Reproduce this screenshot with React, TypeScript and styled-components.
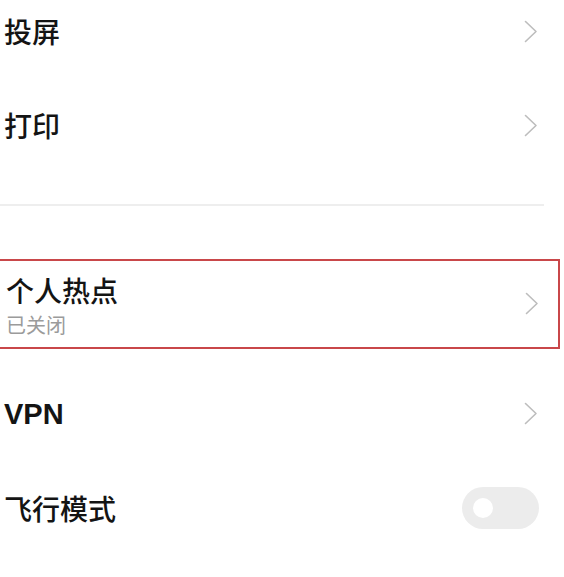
import React from 'react';
import styled, { createGlobalStyle } from 'styled-components';

const GlobalStyle = createGlobalStyle`
  html, body {
    margin: 0;
    padding: 0;
    background: #ffffff;
    overflow: hidden;
  }
  body {
    font-family: "Noto Sans CJK SC", "Noto Sans", sans-serif;
    -webkit-font-smoothing: antialiased;
  }
`;

const Page = styled.div`
  width: 564px;
  height: 577px;
  overflow: hidden;
  display: flex;
  flex-direction: column;
`;

const List = styled.div`
  display: flex;
  flex-direction: column;
  margin-top: -16px;
`;

const Row = styled.div<{ $height?: number }>`
  height: ${({ $height }) => $height ?? 94}px;
  display: flex;
  align-items: center;
  justify-content: space-between;
  padding: 0 26px 0 4px;
  box-sizing: border-box;
`;

const Title = styled.span<{ $latin?: boolean }>`
  font-size: ${({ $latin }) => ($latin ? 29 : 28)}px;
  font-weight: ${({ $latin }) => ($latin ? 700 : 500)};
  font-family: ${({ $latin }) =>
    $latin ? '"Liberation Sans", Arial, sans-serif' : '"Noto Sans CJK SC", sans-serif'};
  color: #141414;
  line-height: 36px;
`;

const Subtitle = styled.span`
  font-size: 20px;
  color: #9b9b9b;
  line-height: 28px;
  margin-top: 3px;
`;

const TextStack = styled.div`
  display: flex;
  flex-direction: column;
`;

const Divider = styled.div`
  height: 1.5px;
  background: #eeeeee;
  margin: 32px 20px 0 0;
`;

const Highlight = styled.div`
  margin: 53px 4px 0 -2px;
  height: 90px;
  border: 2px solid #c9474a;
  box-sizing: border-box;
  display: flex;
  align-items: center;
  justify-content: space-between;
  padding: 3px 19px 0 6px;
`;

const SwitchTrack = styled.div`
  width: 77px;
  height: 42px;
  border-radius: 21px;
  background: #ececec;
  display: flex;
  align-items: center;
  padding-left: 11px;
  box-sizing: border-box;
  margin-right: -1px;
`;

const SwitchKnob = styled.div`
  width: 20px;
  height: 20px;
  border-radius: 50%;
  background: #ffffff;
`;

const Chevron: React.FC<{ offset?: number }> = ({ offset = 0 }) => (
  <svg width="14" height="23" viewBox="0 0 14 23" style={{ marginTop: offset }}>
    <polyline
      points="1.5,1.5 12,11.5 1.5,21.5"
      fill="none"
      stroke="#bdbdbd"
      strokeWidth="1.6"
      strokeLinecap="round"
      strokeLinejoin="round"
    />
  </svg>
);

export default function App() {
  return (
    <Page>
      <GlobalStyle />
      <List>
        <Row>
          <Title>投屏</Title>
          <Chevron />
        </Row>
        <Row>
          <Title>打印</Title>
          <Chevron />
        </Row>
      </List>
      <Divider />
      <Highlight>
        <TextStack>
          <Title>个人热点</Title>
          <Subtitle>已关闭</Subtitle>
        </TextStack>
        <Chevron offset={-3} />
      </Highlight>
      <Row style={{ marginTop: 18 }}>
        <Title $latin>VPN</Title>
        <Chevron />
      </Row>
      <Row>
        <Title>飞行模式</Title>
        <SwitchTrack>
          <SwitchKnob />
        </SwitchTrack>
      </Row>
    </Page>
  );
}
